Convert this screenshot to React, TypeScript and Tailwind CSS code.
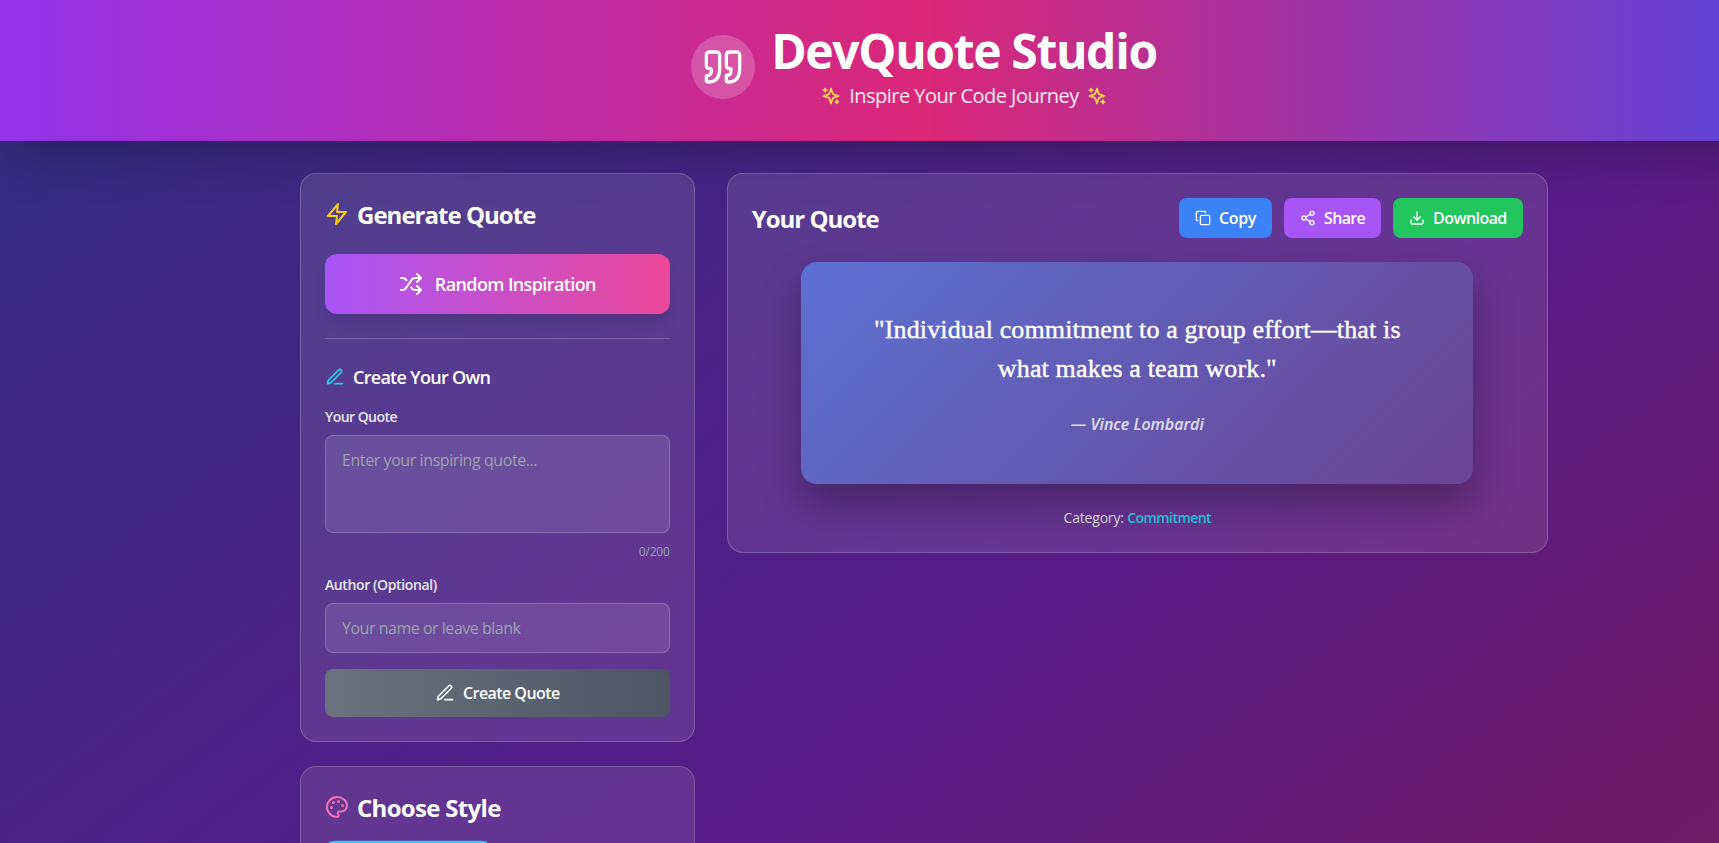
import type { ReactNode } from "react";
import { Copy, Download, Share2 } from "lucide-react";

function Icon({ children, className = "" }: { children: ReactNode; className?: string }) {
  return (
    <svg
      viewBox="0 0 24 24"
      fill="none"
      stroke="currentColor"
      strokeWidth={2}
      strokeLinecap="round"
      strokeLinejoin="round"
      className={`shrink-0 ${className}`}
    >
      {children}
    </svg>
  );
}

const QuoteIcon = ({ className }: { className?: string }) => (
  <Icon className={className}>
    <path d="M3 21c3 0 7-1 7-8V5c0-1.25-.756-2.017-2-2H4c-1.25 0-2 .75-2 1.972V11c0 1.25.75 2 2 2 1 0 1 0 1 1v1c0 1-1 2-2 2s-1 .008-1 1.031V20c0 1 0 1 1 1z" />
    <path d="M15 21c3 0 7-1 7-8V5c0-1.25-.757-2.017-2-2h-4c-1.25 0-2 .75-2 1.972V11c0 1.25.75 2 2 2h.75c0 2.25.25 4-2.75 4v3c0 1 0 1 1 1z" />
  </Icon>
);

const SparklesIcon = ({ className }: { className?: string }) => (
  <Icon className={className}>
    <path d="m12 3-1.912 5.813a2 2 0 0 1-1.275 1.275L3 12l5.813 1.912a2 2 0 0 1 1.275 1.275L12 21l1.912-5.813a2 2 0 0 1 1.275-1.275L21 12l-5.813-1.912a2 2 0 0 1-1.275-1.275L12 3Z" />
    <path d="M5 3v4" />
    <path d="M19 17v4" />
    <path d="M3 5h4" />
    <path d="M17 19h4" />
  </Icon>
);

const ZapIcon = ({ className }: { className?: string }) => (
  <Icon className={className}>
    <polygon points="13 2 3 14 12 14 11 22 21 10 12 10 13 2" />
  </Icon>
);

const ShuffleIcon = ({ className }: { className?: string }) => (
  <Icon className={className}>
    <path d="M2 18h1.4c1.3 0 2.5-.6 3.3-1.7l6.1-8.6c.7-1.1 2-1.7 3.3-1.7H22" />
    <path d="m18 2 4 4-4 4" />
    <path d="M2 6h1.9c1.5 0 2.9.9 3.6 2.2" />
    <path d="M22 18h-5.9c-1.3 0-2.6-.7-3.3-1.8l-.5-.8" />
    <path d="m18 14 4 4-4 4" />
  </Icon>
);

const PenIcon = ({ className }: { className?: string }) => (
  <Icon className={className}>
    <path d="M12 20h9" />
    <path d="M16.376 3.622a1 1 0 0 1 3.002 3.002L7.368 18.635a2 2 0 0 1-.855.506l-2.872.838a.5.5 0 0 1-.62-.62l.838-2.872a2 2 0 0 1 .506-.854z" />
  </Icon>
);

const PaletteIcon = ({ className }: { className?: string }) => (
  <Icon className={className}>
    <circle cx="13.5" cy="6.5" r=".5" fill="currentColor" />
    <circle cx="17.5" cy="10.5" r=".5" fill="currentColor" />
    <circle cx="8.5" cy="7.5" r=".5" fill="currentColor" />
    <circle cx="6.5" cy="12.5" r=".5" fill="currentColor" />
    <path d="M12 2C6.5 2 2 6.5 2 12s4.5 10 10 10c.926 0 1.648-.746 1.648-1.688 0-.437-.18-.835-.437-1.125-.29-.289-.438-.652-.438-1.125a1.64 1.64 0 0 1 1.668-1.668h1.996c3.051 0 5.555-2.503 5.555-5.554C21.965 6.012 17.461 2 12 2z" />
  </Icon>
);

function Panel({ children, className = "" }: { children: ReactNode; className?: string }) {
  return (
    <section className={`rounded-2xl border border-white/20 bg-white/10 p-6 ${className}`}>
      {children}
    </section>
  );
}

function ActionButton({ icon, label, className }: { icon: ReactNode; label: string; className: string }) {
  return (
    <button className={`flex h-10 items-center gap-2 rounded-lg pl-4 font-semibold text-white ${className}`}>
      {icon}
      <span className="whitespace-nowrap">{label}</span>
    </button>
  );
}

export default function App() {
  return (
    <div className="h-[843px] w-full overflow-hidden font-['Open_Sans','Noto_Sans',sans-serif]">
      <div className="h-[1400px] w-[1848px] bg-linear-to-br/srgb from-[#312e81] via-[#581c87] to-[#831843]">
        <header className="flex h-[141px] justify-center bg-linear-to-r/srgb from-[#9333ea] via-[#db2777] to-[#4f46e5] pt-[27px] shadow-2xl">
          <div className="flex items-start gap-4">
            <div className="mt-2 rounded-full bg-white/20 p-3">
              <QuoteIcon className="size-10 text-white" />
            </div>
            <div className="flex flex-col items-center">
              <h1 className="whitespace-nowrap text-5xl leading-[48px] font-bold tracking-[-1.35px] text-white">
                DevQuote Studio
              </h1>
              <p className="mt-[7px] flex items-center gap-2 text-xl leading-7 tracking-[-0.53px] text-white/90">
                <SparklesIcon className="size-5 text-[#fde047]" />
                <span className="whitespace-nowrap">Inspire Your Code Journey</span>
                <SparklesIcon className="size-5 text-[#fde047]" />
              </p>
            </div>
          </div>
        </header>

        <main className="mx-auto grid max-w-7xl grid-cols-3 items-start gap-8 px-4 py-8">
          <div className="flex flex-col gap-6">
            <Panel>
              <h2 className="mb-6 flex items-center gap-2 text-2xl font-bold tracking-[-0.98px] text-white">
                <ZapIcon className="size-6 text-[#facc15]" />
                <span className="translate-y-px">Generate Quote</span>
              </h2>
              <button className="flex h-[60px] w-full items-center justify-center gap-3 rounded-xl bg-linear-to-r/srgb from-[#a855f7] to-[#ec4899] text-lg font-semibold tracking-[-0.61px] text-white shadow-lg">
                <ShuffleIcon className="size-6" />
                <span>Random Inspiration</span>
              </button>
              <div className="mt-6 border-t border-white/20 pt-6">
                <h3 className="mb-4 flex items-center gap-2 text-lg leading-7 font-semibold tracking-[-0.72px] text-white">
                  <PenIcon className="size-5 text-[#22d3ee]" />
                  <span>Create Your Own</span>
                </h3>
                <label className="mb-2 block text-sm font-semibold tracking-[-0.55px] text-[#e5e7eb]">Your Quote</label>
                <textarea
                  rows={3}
                  placeholder="Enter your inspiring quote..."
                  className="block h-[98px] w-full resize-none rounded-lg border border-white/20 bg-white/10 px-4 py-3 tracking-[-0.42px] text-white placeholder:text-[#9ca3af]"
                />
                <div className="mt-[11px] text-right text-xs leading-4 tracking-[-0.2px] text-[#9ca3af]">0/200</div>
                <label className="mt-[15px] mb-2 block text-sm font-semibold tracking-[-0.39px] text-[#e5e7eb]">Author (Optional)</label>
                <input
                  type="text"
                  placeholder="Your name or leave blank"
                  className="block h-[50px] w-full rounded-lg border border-white/20 bg-white/10 px-4 py-3 tracking-[-0.48px] text-white placeholder:text-[#9ca3af]"
                />
                <button className="mt-4 flex h-12 w-full items-center justify-center gap-2 rounded-lg bg-linear-to-r/srgb from-[#6b7280] to-[#4b5563] font-semibold tracking-[-0.55px] text-white">
                  <PenIcon className="size-5" />
                  <span>Create Quote</span>
                </button>
              </div>
            </Panel>

            <Panel>
              <h2 className="mb-[19px] flex items-center gap-2 text-2xl font-bold tracking-[-0.69px] text-white">
                <PaletteIcon className="size-6 text-[#f472b6]" />
                <span className="translate-y-px">Choose Style</span>
              </h2>
              <div className="grid grid-cols-2 gap-3">
                <div className="h-20 scale-[1.03] rounded-xl bg-[#22d3ee]" />
              </div>
            </Panel>
          </div>

          <Panel className="col-span-2">
            <div className="mb-6 flex items-center justify-between">
              <h2 className="translate-y-px text-2xl font-bold tracking-[-1px] text-white">Your Quote</h2>
              <div className="flex gap-3">
                <ActionButton icon={<Copy className="size-4 shrink-0" />} label="Copy" className="w-[93px] bg-[#3b82f6] tracking-[-0.35px]" />
                <ActionButton icon={<Share2 className="size-4 shrink-0" />} label="Share" className="w-[97px] bg-[#a855f7] tracking-[-0.65px]" />
                <ActionButton icon={<Download className="size-4 shrink-0" />} label="Download" className="w-[130px] bg-[#22c55e] tracking-[-0.55px]" />
              </div>
            </div>
            <div className="mx-auto max-w-2xl overflow-hidden rounded-2xl bg-linear-[135deg] from-[#5c71d3] to-[#6a4492] p-12 text-center shadow-[0_20px_40px_rgba(0,0,0,0.3)]">
              <blockquote className="mb-6 font-['Liberation_Serif',serif] text-[26px] leading-[39px] tracking-[0.14px] whitespace-nowrap text-white [-webkit-text-stroke:0.4px_white]">
                "Individual commitment to a group effort—that is
                <br />
                what makes a team work."
              </blockquote>
              <cite className="block font-semibold text-white/80 italic">— Vince Lombardi</cite>
            </div>
            <p className="mt-6 text-center text-sm tracking-[-0.2px] text-[#d1d5db]">
              Category: <span className="font-semibold tracking-[-0.55px] text-[#22c0d6]">Commitment</span>
            </p>
          </Panel>
        </main>
      </div>
    </div>
  );
}
